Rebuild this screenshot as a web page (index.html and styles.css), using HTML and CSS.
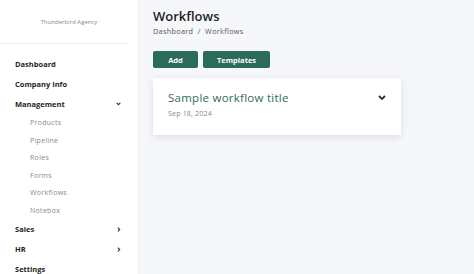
FILE: index.html
```html
<!DOCTYPE html>
<html>
<head>
<meta charset="utf-8">
<link rel="stylesheet" href="styles.css">
</head>
<body>
<div class="app">
  <aside class="sidebar">
    <div class="brand">Thunderbird Agency</div>
    <nav class="nav">
      <div class="item">Dashboard</div>
      <div class="item">Company Info</div>
      <div class="item">Management <span class="chev down"><svg width="5" height="4" viewBox="0 0 5 4"><path d="M0.7 0.9 L2.5 2.7 L4.3 0.9" fill="none" stroke="#333" stroke-width="1.1"/></svg></span></div>
      <div class="sub">
        <div class="subitem">Products</div>
        <div class="subitem">Pipeline</div>
        <div class="subitem">Roles</div>
        <div class="subitem">Forms</div>
        <div class="subitem">Workflows</div>
        <div class="subitem">Notebox</div>
      </div>
      <div class="item">Sales <span class="chev"><svg width="4" height="5" viewBox="0 0 4 5"><path d="M0.9 0.7 L2.7 2.5 L0.9 4.3" fill="none" stroke="#333" stroke-width="1.1"/></svg></span></div>
      <div class="item">HR <span class="chev"><svg width="4" height="5" viewBox="0 0 4 5"><path d="M0.9 0.7 L2.7 2.5 L0.9 4.3" fill="none" stroke="#333" stroke-width="1.1"/></svg></span></div>
      <div class="item">Settings</div>
    </nav>
  </aside>
  <main class="main">
    <h1 class="title">Workflows</h1>
    <div class="crumbs">Dashboard&nbsp;&nbsp;/&nbsp;&nbsp;Workflows</div>
    <div class="actions">
      <button class="btn add">Add</button>
      <button class="btn tpl">Templates</button>
    </div>
    <div class="card">
      <div class="card-text">
        <div class="card-title">Sample workflow title</div>
        <div class="card-date">Sep 18, 2024</div>
      </div>
      <svg class="card-chev" width="8" height="5" viewBox="0 0 8 5"><path d="M1 1 L4 4 L7 1" fill="none" stroke="#1f3b35" stroke-width="1.8"/></svg>
    </div>
  </main>
</div>
</body>
</html>
```
FILE: styles.css
```css
* { box-sizing: border-box; }
html, body { margin: 0; padding: 0; }
body {
  font-family: "Open Sans", "DejaVu Sans", sans-serif;
  background: #f5f7fb;
  color: #222;
  width: 474px;
  height: 274px;
  overflow: hidden;
}
.app { display: flex; height: 274px; }
.sidebar {
  width: 139px;
  flex: none;
  background: #fff;
  border-right: 1px solid #eef0f4;
}
.brand {
  height: 44px;
  display: flex;
  align-items: center;
  justify-content: center;
  font-size: 6px;
  color: #888;
  border-bottom: 1px solid #eef0f3;
  margin-right: 9px;
  padding-left: 9px;
}
.nav { padding-top: 10px; }
.item {
  display: flex;
  justify-content: space-between;
  align-items: center;
  height: 20px;
  padding: 0 17px 0 15px;
  font-size: 7.5px;
  font-weight: 700;
  color: #1e1e1e;
}
.chev { display: flex; }
.sub { padding: 0 0 0 30px; }
.subitem {
  height: 17.5px;
  display: flex;
  align-items: center;
  font-size: 7px;
  color: #8a8a8a;
  letter-spacing: 0.3px;
}
.main { flex: 1; padding: 7px 0 0 14px; }
.title {
  margin: 0;
  font-size: 13px;
  font-weight: 600;
  color: #1f1f1f;
  line-height: 18px;
}
.crumbs {
  margin-top: 1px;
  font-size: 7.3px;
  line-height: 10px;
  color: #555;
  letter-spacing: 0.3px;
}
.actions { display: flex; gap: 5px; margin-top: 15px; }
.btn {
  font-family: inherit;
  border: none;
  background: #2b6b5b;
  color: #fff;
  font-size: 7.5px;
  font-weight: 700;
  height: 17px;
  border-radius: 2px;
  padding: 0;
}
.add { width: 45px; }
.tpl { width: 67px; }
.card {
  margin-top: 10px;
  width: 248px;
  height: 57px;
  background: #fff;
  box-shadow: 0 2px 8px rgba(0,0,0,0.11);
  display: flex;
  justify-content: space-between;
  align-items: flex-start;
  padding: 12px 15px 0 15px;
}
.card-title { font-size: 11.5px; line-height: 16px; color: #336b5e; font-weight: 500; letter-spacing: 0.25px; }
.card-date { font-size: 7px; line-height: 10px; color: #888; margin-top: 3px; letter-spacing: 0.2px; }
.card-chev { margin-top: 5px; }
```
